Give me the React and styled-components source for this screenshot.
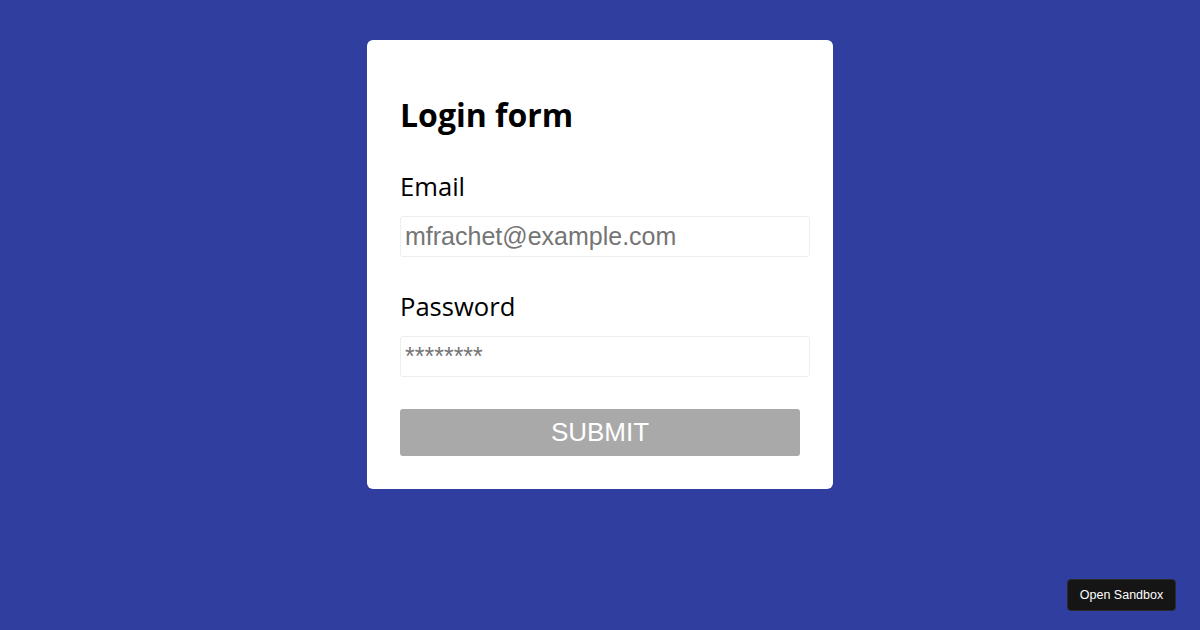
import React from 'react';
import styled, { createGlobalStyle } from 'styled-components';

const GlobalStyle = createGlobalStyle`
  html, body {
    margin: 0;
    padding: 0;
    background-color: #303f9f;
    font-family: "Open Sans", sans-serif;
  }
`;

const Page = styled.div`
  display: flex;
  justify-content: center;
  padding-top: 40px;
  min-height: 630px;
  box-sizing: border-box;
`;

const Card = styled.form`
  width: 400px;
  padding: 33px;
  background-color: white;
  border-radius: 6px;
  align-self: flex-start;
`;

const Title = styled.h1`
  margin: 20px 0 0;
  font-size: 32px;
  line-height: 44px;
  font-weight: 700;
  color: #000;
`;

const Label = styled.label`
  display: block;
  margin-top: ${(props) => props.$top}px;
  font-size: 25.6px;
  line-height: 32px;
  color: #000;
`;

const Input = styled.input`
  display: block;
  width: 100%;
  height: 31px;
  margin-top: 13px;
  padding: 4px;
  border: 1px solid #eceef0;
  border-radius: 3px;
  font-family: "Liberation Sans", Arial, sans-serif;
  font-size: 25px;
  color: #333;
  outline: none;

  &::placeholder {
    color: #757575;
  }
`;

const SubmitButton = styled.button`
  display: block;
  width: 100%;
  height: 47px;
  margin-top: 32px;
  border: none;
  border-radius: 3px;
  background-color: #a9a9a9;
  color: white;
  font-family: "Liberation Sans", Arial, sans-serif;
  font-size: 26px;
  cursor: pointer;
`;

const SandboxLink = styled.a`
  position: fixed;
  right: 24px;
  bottom: 19px;
  display: flex;
  align-items: center;
  justify-content: center;
  width: 109px;
  height: 32px;
  box-sizing: border-box;
  background-color: #151515;
  border: 1px solid #2a2a2a;
  border-radius: 4px;
  color: #fff;
  font-family: "Liberation Sans", Arial, sans-serif;
  font-size: 12.5px;
  text-decoration: none;
`;

const App = () => {
  return (
    <>
      <GlobalStyle />
      <Page>
        <Card onSubmit={(e) => e.preventDefault()}>
          <Title>Login form</Title>
          <Label $top={34} htmlFor="email">Email</Label>
          <Input id="email" type="email" placeholder="mfrachet@example.com" />
          <Label $top={34} htmlFor="password">Password</Label>
          <Input id="password" type="password" placeholder="********" />
          <SubmitButton type="submit">SUBMIT</SubmitButton>
        </Card>
      </Page>
      <SandboxLink href="#">Open Sandbox</SandboxLink>
    </>
  );
};

export default App;
